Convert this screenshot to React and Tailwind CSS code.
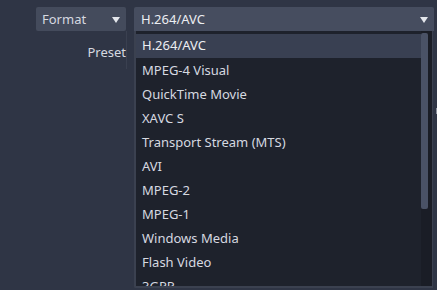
import React from "react";

const formats = [
  "H.264/AVC",
  "MPEG-4 Visual",
  "QuickTime Movie",
  "XAVC S",
  "Transport Stream (MTS)",
  "AVI",
  "MPEG-2",
  "MPEG-1",
  "Windows Media",
  "Flash Video",
  "3GPP",
];

const Caret = () => (
  <svg width="8" height="6" viewBox="0 0 8 6" className="shrink-0">
    <path d="M0 0h8L4 6z" fill="#e4e7ec" />
  </svg>
);

const App = () => {
  const selected = "H.264/AVC";

  return (
    <div
      className="w-[437px] h-[290px] bg-[#2f3545] overflow-hidden relative text-[13px] text-[#d6d9e0]"
      style={{ fontFamily: "'Noto Sans', 'Open Sans', sans-serif" }}
    >
      <div className="flex pt-[7px]">
        <div className="w-[36px]" />
        <div className="w-[90px] h-[24px] bg-[#444b5c] rounded-[2px] flex items-center justify-between pl-[6px] pr-[6px] pt-[1px]">
          <span>Format</span>
          <Caret />
        </div>
        <div className="w-[8px]" />
        <div className="w-[300px] flex flex-col">
          <div className="h-[24px] bg-[#464d5f] rounded-t-[2px] flex items-center justify-between pl-[7px] pr-[6px] pt-[1px] text-[#eceef2]">
            <span>H.264/AVC</span>
            <Caret />
          </div>
        </div>
      </div>

      <div className="flex">
        <div className="w-[126px] flex justify-end pt-[12px] border-r border-[#3a4050] h-[26px] box-content">
          <span>Preset</span>
        </div>
      </div>

      {/* dropdown list */}
      <div className="absolute left-[134px] top-[31px] w-[299px] h-[257px] bg-[#1e222c] border-l-2 border-b-2 border-r border-[#3b4150] rounded-bl-[2px] flex">
        <div className="flex-1 flex flex-col pt-[3px] overflow-hidden">
          {formats.map((f, i) => (
            <div
              key={f}
              className={
                "shrink-0 flex items-center pl-[6px] " +
                (i === 1 ? "h-[25px] " : "h-[24px] ") +
                (f === selected ? "bg-[#394052] text-[#eceef2]" : "")
              }
            >
              {f}
            </div>
          ))}
        </div>
        <div className="w-[11px] bg-[#1a1d26] pt-[2px] flex justify-start">
          <div className="w-[7px] h-[176px] bg-[#4a5266] rounded-[2px]" />
        </div>
      </div>

      <div className="absolute left-[436px] top-[108px] w-[1px] h-[6px] bg-[#8a909c]" />
    </div>
  );
};

export default App;
